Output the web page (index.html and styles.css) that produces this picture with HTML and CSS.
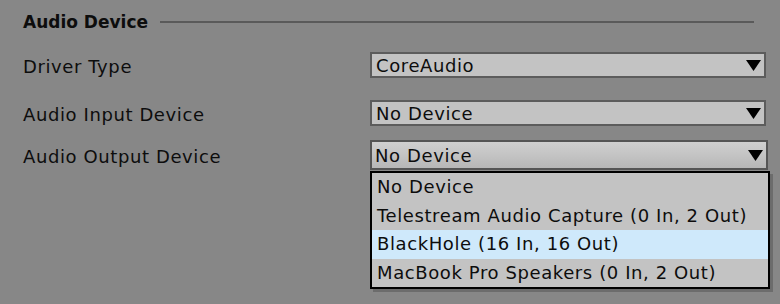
FILE: index.html
```html
<!DOCTYPE html>
<html lang="en">
<head>
    <meta charset="UTF-8">
    <title>Audio Preferences</title>
    <link rel="stylesheet" href="styles.css">
</head>
<body>
    <div class="prefs">
        <div class="section-head">
            <span class="section-title">Audio Device</span>
            <span class="section-rule"></span>
        </div>

        <div class="row row-driver">
            <span class="label">Driver Type</span>
            <div class="chooser">
                <span class="chooser-value">CoreAudio</span>
                <svg class="arrow" width="15" height="11" viewBox="0 0 15 11"><polygon points="0,0 15,0 7.5,11" fill="#000"/></svg>
            </div>
        </div>

        <div class="row row-input">
            <span class="label">Audio Input Device</span>
            <div class="chooser">
                <span class="chooser-value">No Device</span>
                <svg class="arrow" width="15" height="11" viewBox="0 0 15 11"><polygon points="0,0 15,0 7.5,11" fill="#000"/></svg>
            </div>
        </div>

        <div class="row row-output">
            <span class="label">Audio Output Device</span>
            <div class="chooser-wrap">
                <div class="chooser chooser-open">
                    <span class="chooser-value">No Device</span>
                    <svg class="arrow" width="15" height="11" viewBox="0 0 15 11"><polygon points="0,0 15,0 7.5,11" fill="#000"/></svg>
                </div>
                <!-- open dropdown list -->
                <ul class="menu">
                    <li>No Device</li>
                    <li>Telestream Audio Capture (0 In, 2 Out)</li>
                    <li class="selected">BlackHole (16 In, 16 Out)</li>
                    <li>MacBook Pro Speakers (0 In, 2 Out)</li>
                </ul>
            </div>
        </div>
    </div>
</body>
</html>
```

FILE: styles.css
```css
body {
    margin: 0;
    padding: 0;
    background-color: #878787;
    font-family: "DejaVu Sans", sans-serif;
    font-size: 18px;
    letter-spacing: 0.6px;
    color: #0d0d0d;
    height: 304px;
    overflow: hidden;
}

.prefs {
    padding: 8px 14px 0 23px;
}

/* Section heading with a rule */
.section-head {
    display: flex;
    align-items: center;
    height: 28px;
    padding-right: 12px;
}

.section-title {
    font-weight: bold;
    font-size: 17px;
    letter-spacing: 0;
    width: 137px;
}

.section-rule {
    flex: 1;
    height: 2px;
    background-color: #5a5a5a;
}

.row {
    display: flex;
    align-items: center;
    justify-content: space-between;
}

.row-driver {
    margin-top: 16px;
}

.row-input {
    margin-top: 22px;
}

.row-output {
    margin-top: 14px;
}

.label {
    white-space: nowrap;
    padding-top: 2px;
}

/* Closed dropdowns */
.chooser {
    display: flex;
    align-items: center;
    justify-content: space-between;
    width: 396px;
    height: 26px;
    box-sizing: border-box;
    border: 2px solid #5c5c5c;
    background-color: #c3c3c3;
    padding: 0 3px 0 4px;
}

.chooser-value {
    line-height: 22px;
    padding-top: 1px;
}

.arrow {
    display: block;
}

.chooser-wrap {
    position: relative;
    padding: 2px;
    margin-right: -2px;
    background-color: #555555;
}

.chooser-open {
    width: 394px;
    border: none;
    padding-left: 3px;
    padding-right: 3px;
    background: linear-gradient(#d0d0d0, #b7b7b7);
}

/* Open list */
.menu {
    position: absolute;
    top: 31px;
    left: 0;
    width: 400px;
    margin: 0;
    padding: 0;
    list-style: none;
    box-sizing: border-box;
    border: 2px solid #000;
    background-color: #c3c3c3;
    box-shadow: 3px 3px 0 #6c6c6c;
}

.menu li {
    height: 28.5px;
    line-height: 28px;
    padding-left: 5px;
    white-space: nowrap;
}

.menu li.selected {
    background-color: #cfe9fb;
}
```
